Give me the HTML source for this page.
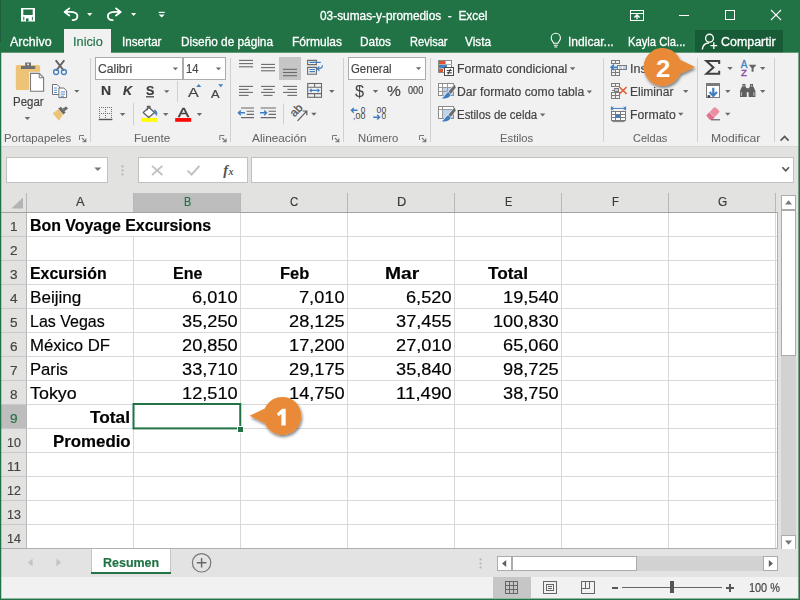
<!DOCTYPE html>
<html><head><meta charset="utf-8"><title>03-sumas-y-promedios - Excel</title>
<style>
html,body{margin:0;padding:0;background:#fff;}
body{width:800px;height:600px;overflow:hidden;font-family:"Liberation Sans",sans-serif;}
#root{position:relative;width:800px;height:600px;overflow:hidden;background:#e2e2e1;}
#root svg{position:absolute;left:0;top:0;}
.t{position:absolute;white-space:pre;transform-origin:0 0;font-family:"Liberation Sans",sans-serif;}

</style></head>
<body>
<div id="root">
<svg width="800" height="600" viewBox="0 0 800 600">
<g shape-rendering="crispEdges">
<rect x="0" y="0" width="800" height="600" fill="#e2e2e1"/>
<rect x="0" y="0" width="800" height="53" fill="#217346"/>
<rect x="64" y="29" width="47" height="24" fill="#f1f1f1"/>
<rect x="695" y="30" width="88" height="23" fill="#185c37"/>
<rect x="1" y="53" width="798" height="93" fill="#f1f1f1"/>
<rect x="1" y="146" width="798" height="1" fill="#d6d6d6"/>
<rect x="90" y="58" width="1" height="84" fill="#d0d0d0"/>
<rect x="230" y="58" width="1" height="84" fill="#d0d0d0"/>
<rect x="343" y="58" width="1" height="84" fill="#d0d0d0"/>
<rect x="430" y="58" width="1" height="84" fill="#d0d0d0"/>
<rect x="603" y="58" width="1" height="84" fill="#d0d0d0"/>
<rect x="697" y="58" width="1" height="84" fill="#d0d0d0"/>
<rect x="774" y="58" width="1" height="84" fill="#d0d0d0"/>
<rect x="6.5" y="157.5" width="101" height="25" fill="#fff" stroke="#c0c0c0"/>
<rect x="138.5" y="157.5" width="109" height="25" fill="#fff" stroke="#c0c0c0"/>
<rect x="251.5" y="157.5" width="542" height="25" fill="#fff" stroke="#c0c0c0"/>
<rect x="1" y="193" width="777" height="19" fill="#e2e2e1"/>
<rect x="133" y="193" width="108" height="19" fill="#bdbdbd"/>
<rect x="1" y="404" width="26" height="24" fill="#bdbdbd"/>
<rect x="27" y="213" width="750" height="335" fill="#fff"/>
<rect x="133" y="213" width="1" height="335" fill="#d8d8d8"/>
<rect x="133" y="193" width="1" height="19" fill="#b8b8b8"/>
<rect x="240" y="213" width="1" height="335" fill="#d8d8d8"/>
<rect x="240" y="193" width="1" height="19" fill="#b8b8b8"/>
<rect x="347" y="213" width="1" height="335" fill="#d8d8d8"/>
<rect x="347" y="193" width="1" height="19" fill="#b8b8b8"/>
<rect x="454" y="213" width="1" height="335" fill="#d8d8d8"/>
<rect x="454" y="193" width="1" height="19" fill="#b8b8b8"/>
<rect x="561" y="213" width="1" height="335" fill="#d8d8d8"/>
<rect x="561" y="193" width="1" height="19" fill="#b8b8b8"/>
<rect x="668" y="213" width="1" height="335" fill="#d8d8d8"/>
<rect x="668" y="193" width="1" height="19" fill="#b8b8b8"/>
<rect x="775" y="213" width="1" height="335" fill="#d8d8d8"/>
<rect x="775" y="193" width="1" height="19" fill="#b8b8b8"/>
<rect x="27" y="236" width="750" height="1" fill="#d8d8d8"/>
<rect x="1" y="236" width="26" height="1" fill="#c9c9c9"/>
<rect x="27" y="260" width="750" height="1" fill="#d8d8d8"/>
<rect x="1" y="260" width="26" height="1" fill="#c9c9c9"/>
<rect x="27" y="284" width="750" height="1" fill="#d8d8d8"/>
<rect x="1" y="284" width="26" height="1" fill="#c9c9c9"/>
<rect x="27" y="308" width="750" height="1" fill="#d8d8d8"/>
<rect x="1" y="308" width="26" height="1" fill="#c9c9c9"/>
<rect x="27" y="332" width="750" height="1" fill="#d8d8d8"/>
<rect x="1" y="332" width="26" height="1" fill="#c9c9c9"/>
<rect x="27" y="356" width="750" height="1" fill="#d8d8d8"/>
<rect x="1" y="356" width="26" height="1" fill="#c9c9c9"/>
<rect x="27" y="380" width="750" height="1" fill="#d8d8d8"/>
<rect x="1" y="380" width="26" height="1" fill="#c9c9c9"/>
<rect x="27" y="404" width="750" height="1" fill="#d8d8d8"/>
<rect x="1" y="404" width="26" height="1" fill="#c9c9c9"/>
<rect x="27" y="428" width="750" height="1" fill="#d8d8d8"/>
<rect x="1" y="428" width="26" height="1" fill="#c9c9c9"/>
<rect x="27" y="452" width="750" height="1" fill="#d8d8d8"/>
<rect x="1" y="452" width="26" height="1" fill="#c9c9c9"/>
<rect x="27" y="476" width="750" height="1" fill="#d8d8d8"/>
<rect x="1" y="476" width="26" height="1" fill="#c9c9c9"/>
<rect x="27" y="500" width="750" height="1" fill="#d8d8d8"/>
<rect x="1" y="500" width="26" height="1" fill="#c9c9c9"/>
<rect x="27" y="524" width="750" height="1" fill="#d8d8d8"/>
<rect x="1" y="524" width="26" height="1" fill="#c9c9c9"/>
<rect x="26" y="193" width="1" height="355" fill="#b8b8b8"/>
<rect x="1" y="212" width="777" height="1" fill="#a2a2a2"/>
<rect x="777" y="212" width="1" height="337" fill="#b0b0b0"/>
<rect x="1" y="548" width="777" height="1" fill="#b0b0b0"/>
<rect x="133" y="213" width="1" height="23" fill="#fff"/>
<rect x="778" y="193" width="21" height="356" fill="#e2e2e1"/>
<rect x="781" y="210" width="15" height="326" fill="#d2d2d2"/>
<rect x="781.5" y="195.5" width="14" height="14" fill="#fff" stroke="#ababab"/>
<rect x="781.5" y="210.5" width="14" height="145" fill="#fff" stroke="#ababab"/>
<rect x="781.5" y="535.5" width="14" height="14" fill="#fff" stroke="#ababab"/>
<rect x="1" y="549" width="798" height="28" fill="#e3e3e3"/>
<rect x="91" y="549" width="80" height="24" fill="#fff"/>
<rect x="91" y="572" width="80" height="2" fill="#217346"/>
<rect x="91" y="549" width="1" height="23" fill="#c6c6c6"/><rect x="170" y="549" width="1" height="23" fill="#c6c6c6"/>
<rect x="512" y="556" width="251" height="15" fill="#d2d2d2"/>
<rect x="497.5" y="556.5" width="14" height="14" fill="#fff" stroke="#ababab"/>
<rect x="512.5" y="556.5" width="124" height="14" fill="#fff" stroke="#ababab"/>
<rect x="763.5" y="556.5" width="14" height="14" fill="#fff" stroke="#ababab"/>
<rect x="1" y="577" width="798" height="22" fill="#f1f1f1"/>
<rect x="493" y="577" width="38" height="22" fill="#c6c6c6"/>
<rect x="0" y="53" width="1" height="547" fill="#217346"/><rect x="799" y="53" width="1" height="547" fill="#217346"/><rect x="0" y="599" width="800" height="1" fill="#217346"/>
<rect x="1" y="598" width="798" height="1" fill="#8fb8a2"/><rect x="1" y="53" width="1" height="545" fill="#217346" opacity="0.25"/><rect x="798" y="53" width="1" height="545" fill="#217346" opacity="0.6"/><rect x="0" y="0" width="1" height="42" fill="#1c5e39"/><rect x="1" y="52" width="798" height="1" fill="#f1f1f1" opacity="0.3"/>
<rect x="133.5" y="404" width="106.75" height="24.4" fill="none" stroke="#217346" stroke-width="2" shape-rendering="geometricPrecision"/>
<rect x="237" y="426" width="7" height="7" fill="#fff"/><rect x="238" y="427" width="5" height="5" fill="#217346"/>
</g>
<rect x="21" y="8" width="14" height="13.5" fill="#ffffff"/><rect x="23.3" y="9.5" width="9.4" height="5.5" fill="#217346"/><rect x="23.3" y="16.8" width="1" height="3.4" fill="#217346"/><rect x="31.9" y="16.8" width="0.9" height="3.4" fill="#217346"/><rect x="26" y="18.4" width="2.5" height="3.1" fill="#217346"/>
<g fill="none" stroke="#ffffff" stroke-width="1.8" stroke-linecap="round" stroke-linejoin="round"><path d="M69.3,8.4 L64.6,12 L69.3,15.5"/><path d="M65.4,12 C70,11.6 77.4,11.4 77.4,16 C77.4,18.6 75.4,20.2 72.6,20.2"/></g>
<polygon points="87.1,13 92.3,13 89.69999999999999,15.9" fill="#ffffff"/>
<g fill="none" stroke="#ffffff" stroke-width="1.8" stroke-linecap="round" stroke-linejoin="round"><path d="M116,8.4 L120.7,12 L116,15.5"/><path d="M119.9,12 C115.3,11.6 107.9,11.4 107.9,16 C107.9,18.6 109.9,20.2 112.7,20.2"/></g>
<polygon points="131,13 136.2,13 133.6,15.9" fill="#ffffff"/>
<line x1="158.7" y1="12.4" x2="164.7" y2="12.4" stroke="#ffffff" stroke-width="1.2"/>
<polygon points="158.7,14.6 164.7,14.6 161.7,17.6" fill="#ffffff"/>
<g fill="none" stroke="#ffffff" stroke-width="1"><rect x="630.5" y="10.5" width="13" height="10"/><path d="M630.5,13.5 H643.5"/><path d="M637,19.2 V15.2 M634.4,17.4 L637,14.8 L639.6,17.4" stroke-width="1.4"/></g>
<line x1="679" y1="15.5" x2="689" y2="15.5" stroke="#ffffff" stroke-width="1"/>
<rect x="725.5" y="10.5" width="9" height="9" fill="none" stroke="#ffffff" stroke-width="1"/>
<path d="M771,10 L781,20 M781,10 L771,20" stroke="#ffffff" stroke-width="1.1" fill="none"/>
<g fill="none" stroke="#ffffff" stroke-width="1.1"><path d="M553.6,43.2 C553.2,41.6 551.2,40.6 551.2,37.9 A4.6,4.6 0 0 1 560.4,37.9 C560.4,40.6 558.4,41.6 558,43.2 Z"/><path d="M553.8,45.2 H557.8 M554.4,47 H557.2"/></g>
<g fill="none" stroke="#ffffff" stroke-width="1.4"><circle cx="709.5" cy="38.2" r="3.9"/><path d="M702.3,49.5 C702.8,45 705.5,43 709,43"/><path d="M713.8,42.3 V49 M710.4,45.7 H717.2" stroke-width="1.3"/></g>
<rect x="15.8" y="65" width="24.3" height="25" rx="1.6" fill="#ecc377"/>
<path d="M21,66 H35.2 V68.9 H21 Z M25.2,62.4 H31 V66 H25.2 Z" fill="#707070"/><rect x="27.2" y="63.6" width="1.8" height="1.6" fill="#f1f1f1"/>
<rect x="29" y="71.9" width="16" height="20.7" fill="#f1f1f1"/>
<path d="M30.5,73.4 H39.2 L43.6,77.8 V91.2 H30.5 Z" fill="#fff" stroke="#7a7a7a" stroke-width="1.1"/><path d="M39.2,73.4 V77.8 H43.6" fill="none" stroke="#7a7a7a" stroke-width="1"/>
<polygon points="24.6,117 30.200000000000003,117 27.400000000000002,120" fill="#6a6a6a"/>
<g fill="none" stroke-linecap="round"><path d="M56.2,60.8 L63.3,70 M63.8,60.8 L56.7,70" stroke="#626262" stroke-width="1.9"/><circle cx="56.1" cy="72" r="2.5" stroke="#3f7fc1" stroke-width="1.3"/><circle cx="63.9" cy="72" r="2.5" stroke="#3f7fc1" stroke-width="1.3"/></g>
<g stroke="#707070" stroke-width="1" fill="#fff"><path d="M52.5,84.5 H57 L59.5,87 V94.5 H52.5 Z"/><path d="M58.9,88 H63.8 L66.6,90.8 V97.6 H58.9 Z"/></g>
<g stroke="#3f7fc1" stroke-width="0.9"><path d="M54,88 H57 M54,90.3 H57 M54,92.5 H57 M60.6,91.9 H65 M60.6,94.1 H65 M60.6,96.2 H64"/></g>
<polygon points="74.2,90 79.4,90 76.8,92.8" fill="#6a6a6a"/>
<path d="M52.6,113.2 L58.6,109.2 L63,114.6 L59,120.8 Z" fill="#ecc377"/>
<path d="M58.2,108.6 L61,106.8 L65.6,112.4 L63.4,114.6 Z" fill="#6a6a6a"/><path d="M62.6,108.6 L66.2,106.4 L68,108.6 L64.6,111.2 Z" fill="#6a6a6a"/>
<path d="M79.5,140 V135.5 H84" fill="none" stroke="#777" stroke-width="1"/>
<path d="M82,138 L85.6,141.6 M85.8,138.4 V141.8 H82.4" fill="none" stroke="#777" stroke-width="1.1"/>
<rect x="95.5" y="57.5" width="87" height="22" fill="#fff" stroke="#ababab" shape-rendering="crispEdges"/>
<rect x="183.5" y="57.5" width="42" height="22" fill="#fff" stroke="#ababab" shape-rendering="crispEdges"/>
<polygon points="172.7,67.4 178.1,67.4 175.39999999999998,70.30000000000001" fill="#6a6a6a"/>
<polygon points="215.8,67.4 221.20000000000002,67.4 218.5,70.30000000000001" fill="#6a6a6a"/>
<line x1="146" y1="96.8" x2="154" y2="96.8" stroke="#3b3b3b" stroke-width="1.2"/>
<polygon points="164,90.2 169.4,90.2 166.7,93.10000000000001" fill="#6a6a6a"/>
<line x1="177.5" y1="81" x2="177.5" y2="102" stroke="#d0d0d0" stroke-width="1"/>
<polygon points="196.2,87 198.7,84 201.2,87" fill="#3f7fc1"/><polygon points="218.2,84.2 223.2,84.2 220.7,87.2" fill="#3f7fc1"/>
<g fill="#6e6e6e" shape-rendering="crispEdges"><rect x="99" y="107" width="1" height="1"/><rect x="99" y="109" width="1" height="1"/><rect x="99" y="111" width="1" height="1"/><rect x="99" y="113" width="1" height="1"/><rect x="99" y="115" width="1" height="1"/><rect x="99" y="117" width="1" height="1"/><rect x="101" y="107" width="1" height="1"/><rect x="101" y="113" width="1" height="1"/><rect x="103" y="107" width="1" height="1"/><rect x="103" y="113" width="1" height="1"/><rect x="105" y="107" width="1" height="1"/><rect x="105" y="109" width="1" height="1"/><rect x="105" y="111" width="1" height="1"/><rect x="105" y="113" width="1" height="1"/><rect x="105" y="115" width="1" height="1"/><rect x="105" y="117" width="1" height="1"/><rect x="107" y="107" width="1" height="1"/><rect x="107" y="113" width="1" height="1"/><rect x="109" y="107" width="1" height="1"/><rect x="109" y="113" width="1" height="1"/><rect x="111" y="107" width="1" height="1"/><rect x="111" y="109" width="1" height="1"/><rect x="111" y="111" width="1" height="1"/><rect x="111" y="113" width="1" height="1"/><rect x="111" y="115" width="1" height="1"/><rect x="111" y="117" width="1" height="1"/></g>
<rect x="98.8" y="118.8" width="13.6" height="1.4" fill="#555"/>
<polygon points="119.9,113 125.30000000000001,113 122.60000000000001,115.9" fill="#6a6a6a"/>
<line x1="133.5" y1="103" x2="133.5" y2="125" stroke="#d0d0d0" stroke-width="1"/>
<rect x="141" y="118" width="16.2" height="3.8" fill="#ffff00"/>
<path d="M143.2,112.6 L149,107.4 L154.6,112.4 L148.7,117.5 Z" fill="#fff" stroke="#5e5e5e" stroke-width="1.3" stroke-linejoin="round"/><path d="M147.4,110.2 V106.4 H150 V108.4" fill="none" stroke="#5e5e5e" stroke-width="1.1"/><path d="M154.6,109.8 C156.6,110.6 157.6,113 156.6,115.4 C155.2,114.4 154.4,112.6 154.6,109.8 Z" fill="#3f7fc1" stroke="#3f7fc1" stroke-width="0.6"/>
<polygon points="163,113 168.4,113 165.7,115.9" fill="#6a6a6a"/>
<rect x="175.2" y="118" width="16" height="3.8" fill="#fb0a0a"/>
<polygon points="196.7,113 202.1,113 199.39999999999998,115.9" fill="#6a6a6a"/>
<path d="M219.8,140 V135.5 H224.3" fill="none" stroke="#777" stroke-width="1"/>
<path d="M222.3,138 L225.9,141.6 M226.10000000000002,138.4 V141.8 H222.70000000000002" fill="none" stroke="#777" stroke-width="1.1"/>
<line x1="239" y1="60.4" x2="253" y2="60.4" stroke="#6a6a6a" stroke-width="1.1"/>
<line x1="239" y1="63.6" x2="253" y2="63.6" stroke="#6a6a6a" stroke-width="1.1"/>
<line x1="239" y1="66.8" x2="253" y2="66.8" stroke="#6a6a6a" stroke-width="1.1"/>
<line x1="261" y1="64.4" x2="275" y2="64.4" stroke="#6a6a6a" stroke-width="1.1"/>
<line x1="261" y1="67.6" x2="275" y2="67.6" stroke="#6a6a6a" stroke-width="1.1"/>
<line x1="261" y1="70.8" x2="275" y2="70.8" stroke="#6a6a6a" stroke-width="1.1"/>
<rect x="279" y="57" width="22" height="23" fill="#c6c6c6" shape-rendering="crispEdges"/>
<line x1="283" y1="69.3" x2="297" y2="69.3" stroke="#6a6a6a" stroke-width="1.1"/>
<line x1="283" y1="72.5" x2="297" y2="72.5" stroke="#6a6a6a" stroke-width="1.1"/>
<line x1="283" y1="75.7" x2="297" y2="75.7" stroke="#6a6a6a" stroke-width="1.1"/>
<g fill="none" stroke-width="1"><path d="M307.6,60.4 H316.4 V64.6 H307.6 Z M307.6,67.4 H316.4 V74.3 H307.6 Z" stroke="#6a6a6a" stroke-width="1.1"/><path d="M309.4,62.4 H320.8 M309.4,69.5 H315 M309.4,71.6 H315" stroke="#3f7fc1" stroke-width="1.1"/><path d="M322.4,65.2 C322.6,67.8 320.6,68.9 317.2,68.8 M319.4,66.5 L317,68.8 L319.4,70.9" stroke="#3f7fc1" stroke-width="1.2"/></g>
<line x1="239" y1="86.4" x2="253" y2="86.4" stroke="#6a6a6a" stroke-width="1.1"/>
<line x1="261" y1="86.4" x2="275" y2="86.4" stroke="#6a6a6a" stroke-width="1.1"/>
<line x1="283" y1="86.4" x2="297" y2="86.4" stroke="#6a6a6a" stroke-width="1.1"/>
<line x1="239" y1="89.4" x2="248.6" y2="89.4" stroke="#6a6a6a" stroke-width="1.1"/>
<line x1="263.4" y1="89.4" x2="272.6" y2="89.4" stroke="#6a6a6a" stroke-width="1.1"/>
<line x1="287.4" y1="89.4" x2="297" y2="89.4" stroke="#6a6a6a" stroke-width="1.1"/>
<line x1="239" y1="92.4" x2="253" y2="92.4" stroke="#6a6a6a" stroke-width="1.1"/>
<line x1="261" y1="92.4" x2="275" y2="92.4" stroke="#6a6a6a" stroke-width="1.1"/>
<line x1="283" y1="92.4" x2="297" y2="92.4" stroke="#6a6a6a" stroke-width="1.1"/>
<line x1="239" y1="95.4" x2="248.6" y2="95.4" stroke="#6a6a6a" stroke-width="1.1"/>
<line x1="263.4" y1="95.4" x2="272.6" y2="95.4" stroke="#6a6a6a" stroke-width="1.1"/>
<line x1="287.4" y1="95.4" x2="297" y2="95.4" stroke="#6a6a6a" stroke-width="1.1"/>
<g fill="none" stroke="#6a6a6a" stroke-width="1.1"><rect x="307.7" y="83.5" width="13.8" height="13.8"/><path d="M307.7,87.2 H321.5 M307.7,93.6 H321.5 M314.6,83.5 V87.2 M314.6,93.6 V97.3"/></g><path d="M310,90.4 H319.2 M311.6,88.8 L310,90.4 L311.6,92 M317.6,88.8 L319.2,90.4 L317.6,92" fill="none" stroke="#3f7fc1" stroke-width="1.1"/>
<polygon points="329.1,90 334.5,90 331.8,92.9" fill="#6a6a6a"/>
<g fill="none" stroke="#6a6a6a" stroke-width="1.1"><path d="M241,108 H254 M246.6,111.2 H254 M246.6,114.4 H254 M241,117.6 H254"/><path d="M260.6,108 H276 M268.6,111.2 H276 M268.6,114.4 H276 M260.6,117.6 H276"/></g>
<g fill="none" stroke="#3f7fc1" stroke-width="1.4"><path d="M238.6,112.8 H245 M240.8,110.4 L238.4,112.8 L240.8,115.2"/><path d="M260,112.8 H266.4 M264.2,110.4 L266.6,112.8 L264.2,115.2"/></g>
<line x1="283.5" y1="103.5" x2="283.5" y2="124.5" stroke="#d0d0d0" stroke-width="1"/>
<text x="0" y="0" transform="translate(294.6,117.6) rotate(-47)" font-family="Liberation Sans, sans-serif" font-size="11.5" fill="#505050" stroke="#505050" stroke-width="0.25">ab</text>
<path d="M297.6,120.8 L306.4,111.4 M302.6,111 H306.8 V115.2" fill="none" stroke="#5a5a5a" stroke-width="1.2"/>
<polygon points="311.2,112.8 316.59999999999997,112.8 313.9,115.7" fill="#6a6a6a"/>
<path d="M332.5,140 V135.5 H337" fill="none" stroke="#777" stroke-width="1"/>
<path d="M335,138 L338.6,141.6 M338.8,138.4 V141.8 H335.4" fill="none" stroke="#777" stroke-width="1.1"/>
<rect x="348.5" y="57.5" width="77" height="22" fill="#fff" stroke="#ababab" shape-rendering="crispEdges"/>
<polygon points="415.9,67.2 421.29999999999995,67.2 418.59999999999997,70.10000000000001" fill="#6a6a6a"/>
<polygon points="372.8,90 378.2,90 375.5,92.9" fill="#6a6a6a"/>
<path d="M351.4,110.3 H357.6 M353.8,107.9 L351.4,110.3 L353.8,112.7" fill="none" stroke="#3f7fc1" stroke-width="1.4"/>
<g font-family="Liberation Sans, sans-serif" font-size="8.2" fill="#444"><text x="360.7" y="113.1">0</text><text x="353" y="119.4" textLength="12.4" lengthAdjust="spacingAndGlyphs">,00</text><text x="376.6" y="113.1" textLength="9.6" lengthAdjust="spacingAndGlyphs">00</text><text x="381.6" y="119.4">0</text></g>
<path d="M373.2,117.2 H379.6 M377.2,114.8 L379.6,117.2 L377.2,119.6" fill="none" stroke="#3f7fc1" stroke-width="1.4"/>
<path d="M419.5,140 V135.5 H424" fill="none" stroke="#777" stroke-width="1"/>
<path d="M422,138 L425.6,141.6 M425.8,138.4 V141.8 H422.4" fill="none" stroke="#777" stroke-width="1.1"/>
<g shape-rendering="crispEdges"><rect x="438.5" y="60.5" width="13" height="12" fill="#fff" stroke="#8a8a8a"/><path d="M445.5,60.5 V72 M438.5,64.5 H451.5 M438.5,68.5 H451.5" stroke="#b0b0b0" fill="none"/><rect x="439" y="61" width="6.4" height="3.4" fill="#dc5430"/><rect x="439" y="65" width="8" height="3.4" fill="#3f7fc1"/><rect x="439" y="69" width="3.6" height="3.2" fill="#dc5430"/><rect x="444.5" y="67.5" width="9.4" height="8" fill="#fff" stroke="#4a4a4a"/></g><path d="M446.8,70.4 H451.8 M446.8,72.8 H451.8 M450.6,68.8 L448,74.4" stroke="#333" stroke-width="1" fill="none"/>
<polygon points="569.9,67.3 575.3,67.3 572.6,70.2" fill="#6a6a6a"/>
<g shape-rendering="crispEdges"><rect x="438.5" y="83.5" width="15" height="12" fill="#fff" stroke="#8a8a8a"/>
<rect x="443" y="88" width="10" height="7" fill="#bdd3ec"/>
<path d="M438.5,87.5 H453.5 M438.5,91.5 H453.5 M442.5,83.5 V95.5 M447.5,83.5 V95.5" stroke="#9a9a9a" fill="none"/>
</g>
<path d="M454.6,84.6 L455.8,87.6 L450.6,94.2 L448.2,92 Z" fill="#6a6a6a" stroke="#f1f1f1" stroke-width="1.2" paint-order="stroke"/><path d="M448.1,92.1 L450.7,94.4 C450,97.6 445.8,99 441.8,98.2 C444.4,97 445.2,94.2 448.1,92.1 Z" fill="#3f7fc1" stroke="#f1f1f1" stroke-width="1.2" paint-order="stroke"/>
<polygon points="586.7,90.6 592.1,90.6 589.4000000000001,93.5" fill="#6a6a6a"/>
<g shape-rendering="crispEdges"><rect x="438.5" y="106.5" width="15" height="12" fill="#fff" stroke="#8a8a8a"/>
<rect x="443" y="110" width="10" height="8" fill="#bdd3ec"/>
<path d="M438.5,109.5 H453.5 M442.5,106.5 V118.5" stroke="#9a9a9a" fill="none"/>
</g>
<path d="M454.6,107.6 L455.8,110.6 L450.6,117.2 L448.2,115 Z" fill="#6a6a6a" stroke="#f1f1f1" stroke-width="1.2" paint-order="stroke"/><path d="M448.1,115.1 L450.7,117.4 C450,120.6 445.8,122 441.8,121.2 C444.4,120 445.2,117.2 448.1,115.1 Z" fill="#3f7fc1" stroke="#f1f1f1" stroke-width="1.2" paint-order="stroke"/>
<polygon points="539.9,113.5 545.3,113.5 542.6,116.4" fill="#6a6a6a"/>
<g shape-rendering="crispEdges" fill="none" stroke="#7a7a7a"><rect x="611.5" y="60.5" width="8" height="3"/><path d="M615.5,60.5 V63.5"/><rect x="611.5" y="69.5" width="8" height="6"/><path d="M615.5,69.5 V75.5 M611.5,72.5 H619.5"/><rect x="617.5" y="65.5" width="9" height="4" fill="#fff"/><rect x="619" y="66" width="3" height="3" fill="#b9d1ec" stroke="none"/><rect x="623" y="66" width="3" height="3" fill="#b9d1ec" stroke="none"/></g>
<path d="M611.2,67.3 H617.4 M614,64.5 L611.2,67.3 L614,70.1" fill="none" stroke="#3f7fc1" stroke-width="1.7"/>
<g shape-rendering="crispEdges" fill="none" stroke="#7a7a7a"><rect x="611.5" y="83.5" width="8" height="3"/><path d="M615.5,83.5 V86.5"/><rect x="611.5" y="92.5" width="8" height="6"/><path d="M615.5,92.5 V98.5 M611.5,95.5 H619.5"/><rect x="614.5" y="88.5" width="4" height="3" fill="#b9d1ec"/><path d="M611.5,90.5 H614.5"/></g>
<path d="M619.4,87 L626.6,93.8 M626.6,87 L619.4,93.8" stroke="#e0623c" stroke-width="1.6" fill="none"/>
<polygon points="683,90 688.4,90 685.7,92.9" fill="#6a6a6a"/>
<path d="M611.4,108.4 H625.6 M611.4,106.4 V110.4 M625.6,106.4 V110.4 M613.4,106.8 L611.6,108.4 L613.4,110 M623.6,106.8 L625.4,108.4 L623.6,110" fill="none" stroke="#3f7fc1" stroke-width="1"/>
<g shape-rendering="crispEdges"><rect x="611.5" y="111.5" width="14" height="9" fill="#fff" stroke="#7a7a7a"/><path d="M611.5,114.5 H625.5 M611.5,117.5 H625.5 M615.5,111.5 V120.5 M620.5,111.5 V120.5" stroke="#7a7a7a" fill="none"/><rect x="616" y="115" width="4" height="3" fill="#3f7fc1"/></g>
<path d="M612.4,121.6 H624.6" stroke="#7a7a7a" stroke-width="1"/>
<polygon points="678.1,112.8 683.5,112.8 680.8000000000001,115.7" fill="#6a6a6a"/>
<path d="M719.2,64 V61.1 H706.4 L713.4,67.4 L706.4,73.7 H719.2 V70.8" fill="none" stroke="#404040" stroke-width="2" stroke-linejoin="miter"/>
<polygon points="727.3,67 732.6999999999999,67 730.0,69.9" fill="#6a6a6a"/>
<g font-family="Liberation Sans, sans-serif"><text x="740.8" y="67.6" font-size="10" fill="#3f7fc1" stroke="#3f7fc1" stroke-width="0.3">A</text><text x="741" y="75.9" font-size="9.6" fill="#8747a3" stroke="#8747a3" stroke-width="0.3">Z</text></g>
<path d="M748.8,64.8 H756.4 L753.6,68.2 V71.8 H751.6 V68.2 Z" fill="#666"/>
<polygon points="760,67 765.4,67 762.7,69.9" fill="#6a6a6a"/>
<g shape-rendering="crispEdges"><rect x="706.5" y="83.5" width="13" height="14.4" fill="#fff" stroke="#7a7a7a"/><rect x="706" y="83" width="14" height="3" fill="#7a7a7a"/></g><path d="M713.3,87.8 V95.4 M709.6,92 L713.3,95.8 L717,92" fill="none" stroke="#3f7fc1" stroke-width="2.2"/><rect x="707.6" y="95.2" width="2.6" height="2.2" fill="#333"/>
<polygon points="725.1,90 730.5,90 727.8000000000001,92.9" fill="#6a6a6a"/>
<g fill="#5f5f5f"><path d="M740,97 V91 L742,86.4 H745.8 L746.8,90 V97 Z"/><path d="M748.6,97 V90 L749.6,86.4 H753.4 L755.4,91 V97 Z"/><rect x="742.4" y="84" width="3" height="2.6"/><rect x="750" y="84" width="3" height="2.6"/><rect x="746" y="88.2" width="3.4" height="4"/></g>
<path d="M741.4,92 V96 M753.9,92 V96 M743.9,85 V86 M751.5,85 V86" stroke="#c9c9c9" stroke-width="0.9" fill="none"/>
<polygon points="760,90 765.4,90 762.7,92.9" fill="#6a6a6a"/>
<path d="M706.4,115.4 L713.4,108 Q714.6,106.8 716,107.8 L719,110.4 Q720,111.6 718.8,112.8 L712.4,119.4 H709.6 Z" fill="#ea8fa1"/><path d="M706.4,115.4 L709.4,112.3 L714.6,117.1 L712.4,119.4 H709.6 Z" fill="#e2738c"/><path d="M709.4,112.3 L714.6,117.1" stroke="#f6ccd5" stroke-width="0.8"/><path d="M711,119.8 H720" stroke="#555" stroke-width="1.1"/>
<polygon points="725,112.8 730.4,112.8 727.7,115.7" fill="#6a6a6a"/>
<path d="M780.6,140.6 L784.6,136.4 L788.6,140.6" fill="none" stroke="#555" stroke-width="1.6"/>
<polygon points="94.3,167.5 101.3,167.5 97.8,171.1" fill="#777"/>
<rect x="121.6" y="165.5" width="1.8" height="1.8" fill="#b0b0b0"/>
<rect x="121.6" y="169.5" width="1.8" height="1.8" fill="#b0b0b0"/>
<rect x="121.6" y="173.5" width="1.8" height="1.8" fill="#b0b0b0"/>
<path d="M152,165.8 L162.4,175 M162.4,165.8 L152,175" stroke="#c0c0c0" stroke-width="1.7" fill="none"/>
<path d="M187.6,170.6 L191.6,174.6 L199.4,165.8" stroke="#c0c0c0" stroke-width="2" fill="none"/>
<text x="223.2" y="174.6" font-family="Liberation Serif, serif" font-style="italic" font-weight="bold" font-size="14.5" fill="#505050">f</text><text x="228.6" y="174.8" font-family="Liberation Serif, serif" font-style="italic" font-weight="bold" font-size="10" fill="#505050">x</text>
<path d="M782.4,167.2 L785.7,170.8 L789,167.2" fill="none" stroke="#555" stroke-width="1.7"/>
<polygon points="23,197.6 23,208.6 11.4,208.6" fill="#b4b4b4"/>
<polygon points="785,204.6 792,204.6 788.5,200.2" fill="#777"/><polygon points="785,540.4 792,540.4 788.5,544.8" fill="#777"/>
<polygon points="506.2,560 506.2,567 502,563.5" fill="#606060"/><polygon points="768.8,560 768.8,567 773,563.5" fill="#606060"/>
<rect x="479.6" y="558.6" width="1.8" height="1.8" fill="#b0b0b0"/>
<rect x="479.6" y="562.6" width="1.8" height="1.8" fill="#b0b0b0"/>
<rect x="479.6" y="566.6" width="1.8" height="1.8" fill="#b0b0b0"/>
<polygon points="32.6,558.4 32.6,566.6 27.8,562.5" fill="#c4c4c4"/><polygon points="56.4,558.4 56.4,566.6 61.2,562.5" fill="#c4c4c4"/>
<circle cx="201.6" cy="562.8" r="9.2" fill="none" stroke="#777" stroke-width="1.2"/><path d="M196.8,562.8 H206.4 M201.6,558 V567.6" stroke="#666" stroke-width="1.4"/>
<g shape-rendering="crispEdges" fill="none" stroke="#666"><rect x="505.5" y="581.5" width="12" height="12"/><path d="M509.5,581.5 V593.5 M513.5,581.5 V593.5 M505.5,585.5 H517.5 M505.5,589.5 H517.5"/></g>
<g shape-rendering="crispEdges" fill="none" stroke="#666"><rect x="543.5" y="581.5" width="13" height="12"/><rect x="546.5" y="584.5" width="7" height="6"/><path d="M548,586.5 H552 M548,588.5 H552"/></g>
<g shape-rendering="crispEdges" fill="none" stroke="#666"><rect x="581.5" y="581.5" width="13" height="12"/><path d="M585.5,581.5 V588.5 M589.5,581.5 V588.5 M581.5,588.5 H590"/></g>
<rect x="612" y="587" width="6" height="2" fill="#555"/>
<rect x="622" y="587" width="100" height="1" fill="#666" shape-rendering="crispEdges"/>
<rect x="670" y="581" width="4" height="12" fill="#555" shape-rendering="crispEdges"/>
<path d="M726,588 H734 M730,584 V592" stroke="#555" stroke-width="2" shape-rendering="crispEdges"/>
</svg>
<span class="t" style="left:320.20px;top:10.14px;font-size:12px;line-height:12px;color:#fff;transform:scaleX(0.9882);-webkit-text-stroke:0.3px #fff;white-space:pre;">03-sumas-y-promedios  -  Excel</span>
<span class="t" style="left:9.97px;top:35.72px;font-size:12.5px;line-height:12.5px;color:#fff;transform:scaleX(0.9991);-webkit-text-stroke:0.3px #fff;">Archivo</span>
<span class="t" style="left:121.62px;top:35.72px;font-size:12.5px;line-height:12.5px;color:#fff;transform:scaleX(0.9318);-webkit-text-stroke:0.3px #fff;">Insertar</span>
<span class="t" style="left:180.62px;top:35.72px;font-size:12.5px;line-height:12.5px;color:#fff;transform:scaleX(0.9456);-webkit-text-stroke:0.3px #fff;">Diseño de página</span>
<span class="t" style="left:291.88px;top:35.72px;font-size:12.5px;line-height:12.5px;color:#fff;transform:scaleX(0.9598);-webkit-text-stroke:0.3px #fff;">Fórmulas</span>
<span class="t" style="left:360.38px;top:35.72px;font-size:12.5px;line-height:12.5px;color:#fff;transform:scaleX(0.9493);-webkit-text-stroke:0.3px #fff;">Datos</span>
<span class="t" style="left:409.88px;top:35.72px;font-size:12.5px;line-height:12.5px;color:#fff;transform:scaleX(0.8850);-webkit-text-stroke:0.3px #fff;">Revisar</span>
<span class="t" style="left:465.38px;top:35.72px;font-size:12.5px;line-height:12.5px;color:#fff;transform:scaleX(0.9428);-webkit-text-stroke:0.3px #fff;">Vista</span>
<span class="t" style="left:567.98px;top:35.72px;font-size:12.5px;line-height:12.5px;color:#fff;transform:scaleX(0.9661);-webkit-text-stroke:0.3px #fff;">Indicar...</span>
<span class="t" style="left:627.77px;top:35.72px;font-size:12.5px;line-height:12.5px;color:#fff;transform:scaleX(0.8988);-webkit-text-stroke:0.3px #fff;">Kayla Cla...</span>
<span class="t" style="left:720.67px;top:35.72px;font-size:12.5px;line-height:12.5px;color:#fff;transform:scaleX(0.9941);-webkit-text-stroke:0.3px #fff;">Compartir</span>
<span class="t" style="left:72.62px;top:35.72px;font-size:12.5px;line-height:12.5px;color:#217346;transform:scaleX(1.0193);-webkit-text-stroke:0.18px #217346;">Inicio</span>
<span class="t" style="left:12.80px;top:96.34px;font-size:12px;line-height:12px;color:#444444;transform:scaleX(0.9553);-webkit-text-stroke:0.18px #444444;">Pegar</span>
<span class="t" style="left:4.04px;top:132.92px;font-size:11.2px;line-height:11.2px;color:#666666;transform:scaleX(1.0179);-webkit-text-stroke:0.05px #666666;">Portapapeles</span>
<span class="t" style="left:133.94px;top:132.92px;font-size:11.2px;line-height:11.2px;color:#666666;transform:scaleX(1.0395);-webkit-text-stroke:0.05px #666666;">Fuente</span>
<span class="t" style="left:251.64px;top:132.92px;font-size:11.2px;line-height:11.2px;color:#666666;transform:scaleX(1.0561);-webkit-text-stroke:0.05px #666666;">Alineación</span>
<span class="t" style="left:358.24px;top:132.92px;font-size:11.2px;line-height:11.2px;color:#666666;transform:scaleX(1.0131);-webkit-text-stroke:0.05px #666666;">Número</span>
<span class="t" style="left:499.94px;top:132.92px;font-size:11.2px;line-height:11.2px;color:#666666;transform:scaleX(1.0081);-webkit-text-stroke:0.05px #666666;">Estilos</span>
<span class="t" style="left:632.94px;top:132.92px;font-size:11.2px;line-height:11.2px;color:#666666;transform:scaleX(0.9854);-webkit-text-stroke:0.05px #666666;">Celdas</span>
<span class="t" style="left:711.14px;top:132.92px;font-size:11.2px;line-height:11.2px;color:#666666;transform:scaleX(1.0888);-webkit-text-stroke:0.05px #666666;">Modificar</span>
<span class="t" style="left:98.30px;top:62.64px;font-size:12px;line-height:12px;color:#444444;transform:scaleX(1.0084);-webkit-text-stroke:0.18px #444444;">Calibri</span>
<span class="t" style="left:186.40px;top:62.64px;font-size:12px;line-height:12px;color:#444444;transform:scaleX(0.9319);-webkit-text-stroke:0.18px #444444;">14</span>
<span class="t" style="left:101.08px;top:84.97px;font-size:12.5px;line-height:12.5px;color:#3b3b3b;transform:scaleX(1.1128);font-weight:bold;-webkit-text-stroke:0.18px #3b3b3b;">N</span>
<span class="t" style="left:122.97px;top:84.97px;font-size:12.5px;line-height:12.5px;color:#3b3b3b;transform:scaleX(1.0131);font-weight:bold;font-style:italic;-webkit-text-stroke:0.18px #3b3b3b;">K</span>
<span class="t" style="left:145.88px;top:84.97px;font-size:12.5px;line-height:12.5px;color:#3b3b3b;transform:scaleX(1.0007);font-weight:bold;-webkit-text-stroke:0.18px #3b3b3b;">S</span>
<span class="t" style="left:187.62px;top:85.97px;font-size:13.5px;line-height:13.5px;color:#444444;transform:scaleX(1.1924);-webkit-text-stroke:0.18px #444444;">A</span>
<span class="t" style="left:210.67px;top:88.51px;font-size:10.5px;line-height:10.5px;color:#444444;transform:scaleX(1.2187);-webkit-text-stroke:0.18px #444444;">A</span>
<span class="t" style="left:177.76px;top:107.21px;font-size:12.8px;line-height:12.8px;color:#444444;transform:scaleX(1.2964);-webkit-text-stroke:0.18px #444444;-webkit-text-stroke:0.5px #444;">A</span>
<span class="t" style="left:350.80px;top:62.74px;font-size:12px;line-height:12px;color:#444444;transform:scaleX(0.9484);-webkit-text-stroke:0.18px #444444;">General</span>
<span class="t" style="left:355.18px;top:82.83px;font-size:16.5px;line-height:16.5px;color:#444444;transform:scaleX(0.9850);-webkit-text-stroke:0.18px #444444;-webkit-text-stroke:0;">$</span>
<span class="t" style="left:386.87px;top:83.94px;font-size:14.6px;line-height:14.6px;color:#444444;transform:scaleX(1.0674);-webkit-text-stroke:0.18px #444444;">%</span>
<span class="t" style="left:407.50px;top:85.93px;font-size:10px;line-height:10px;color:#444444;transform:scaleX(0.9109);-webkit-text-stroke:0.18px #444444;">000</span>
<span class="t" style="left:457.10px;top:62.74px;font-size:12px;line-height:12px;color:#444444;transform:scaleX(1.0207);-webkit-text-stroke:0.18px #444444;">Formato condicional</span>
<span class="t" style="left:457.10px;top:85.74px;font-size:12px;line-height:12px;color:#444444;transform:scaleX(1.0144);-webkit-text-stroke:0.18px #444444;">Dar formato como tabla</span>
<span class="t" style="left:457.10px;top:108.84px;font-size:12px;line-height:12px;color:#444444;transform:scaleX(0.9542);-webkit-text-stroke:0.18px #444444;">Estilos de celda</span>
<span class="t" style="left:629.60px;top:62.64px;font-size:12px;line-height:12px;color:#444444;transform:scaleX(1.0445);-webkit-text-stroke:0.18px #444444;">Insertar</span>
<span class="t" style="left:629.60px;top:85.74px;font-size:12px;line-height:12px;color:#444444;transform:scaleX(1.0013);-webkit-text-stroke:0.18px #444444;">Eliminar</span>
<span class="t" style="left:629.60px;top:108.84px;font-size:12px;line-height:12px;color:#444444;transform:scaleX(1.0249);-webkit-text-stroke:0.18px #444444;">Formato</span>
<span class="t" style="left:749.10px;top:582.24px;font-size:12px;line-height:12px;color:#444444;transform:scaleX(0.9080);-webkit-text-stroke:0.18px #444444;">100 %</span>
<span class="t" style="left:102.88px;top:556.72px;font-size:12.5px;line-height:12.5px;color:#217346;transform:scaleX(0.9977);font-weight:bold;-webkit-text-stroke:0.18px #217346;">Resumen</span>
<span class="t" style="left:75.86px;top:196.26px;font-size:12.8px;line-height:12.8px;color:#3a3a3a;transform:scaleX(1.0039);-webkit-text-stroke:0.18px #3a3a3a;">A</span>
<span class="t" style="left:184.36px;top:196.26px;font-size:12.8px;line-height:12.8px;color:#217346;transform:scaleX(0.8518);-webkit-text-stroke:0.18px #217346;">B</span>
<span class="t" style="left:289.96px;top:196.26px;font-size:12.8px;line-height:12.8px;color:#3a3a3a;transform:scaleX(0.8951);-webkit-text-stroke:0.18px #3a3a3a;">C</span>
<span class="t" style="left:396.96px;top:196.26px;font-size:12.8px;line-height:12.8px;color:#3a3a3a;transform:scaleX(1.0032);-webkit-text-stroke:0.18px #3a3a3a;">D</span>
<span class="t" style="left:505.26px;top:196.26px;font-size:12.8px;line-height:12.8px;color:#3a3a3a;transform:scaleX(0.8518);-webkit-text-stroke:0.18px #3a3a3a;">E</span>
<span class="t" style="left:612.16px;top:196.26px;font-size:12.8px;line-height:12.8px;color:#3a3a3a;transform:scaleX(0.8789);-webkit-text-stroke:0.18px #3a3a3a;">F</span>
<span class="t" style="left:718.06px;top:196.26px;font-size:12.8px;line-height:12.8px;color:#3a3a3a;transform:scaleX(0.9309);-webkit-text-stroke:0.18px #3a3a3a;">G</span>
<span class="t" style="left:10.03px;top:220.62px;font-size:12.5px;line-height:12.5px;color:#444444;transform:scaleX(1.0858);-webkit-text-stroke:0.18px #444444;">1</span>
<span class="t" style="left:10.03px;top:244.62px;font-size:12.5px;line-height:12.5px;color:#444444;transform:scaleX(1.0858);-webkit-text-stroke:0.18px #444444;">2</span>
<span class="t" style="left:10.03px;top:268.62px;font-size:12.5px;line-height:12.5px;color:#444444;transform:scaleX(1.0858);-webkit-text-stroke:0.18px #444444;">3</span>
<span class="t" style="left:10.03px;top:292.62px;font-size:12.5px;line-height:12.5px;color:#444444;transform:scaleX(1.0858);-webkit-text-stroke:0.18px #444444;">4</span>
<span class="t" style="left:10.03px;top:316.62px;font-size:12.5px;line-height:12.5px;color:#444444;transform:scaleX(1.0858);-webkit-text-stroke:0.18px #444444;">5</span>
<span class="t" style="left:10.03px;top:340.62px;font-size:12.5px;line-height:12.5px;color:#444444;transform:scaleX(1.0858);-webkit-text-stroke:0.18px #444444;">6</span>
<span class="t" style="left:10.03px;top:364.62px;font-size:12.5px;line-height:12.5px;color:#444444;transform:scaleX(1.0858);-webkit-text-stroke:0.18px #444444;">7</span>
<span class="t" style="left:10.03px;top:388.62px;font-size:12.5px;line-height:12.5px;color:#444444;transform:scaleX(1.0858);-webkit-text-stroke:0.18px #444444;">8</span>
<span class="t" style="left:10.03px;top:412.62px;font-size:12.5px;line-height:12.5px;color:#217346;transform:scaleX(1.0858);-webkit-text-stroke:0.18px #217346;">9</span>
<span class="t" style="left:6.88px;top:436.62px;font-size:12.5px;line-height:12.5px;color:#444444;transform:scaleX(0.9960);-webkit-text-stroke:0.18px #444444;">10</span>
<span class="t" style="left:6.88px;top:460.62px;font-size:12.5px;line-height:12.5px;color:#444444;transform:scaleX(1.0667);-webkit-text-stroke:0.18px #444444;">11</span>
<span class="t" style="left:6.88px;top:484.62px;font-size:12.5px;line-height:12.5px;color:#444444;transform:scaleX(0.9960);-webkit-text-stroke:0.18px #444444;">12</span>
<span class="t" style="left:6.88px;top:508.62px;font-size:12.5px;line-height:12.5px;color:#444444;transform:scaleX(0.9960);-webkit-text-stroke:0.18px #444444;">13</span>
<span class="t" style="left:6.88px;top:532.62px;font-size:12.5px;line-height:12.5px;color:#444444;transform:scaleX(0.9960);-webkit-text-stroke:0.18px #444444;">14</span>
<span class="t" style="left:29.79px;top:217.40px;font-size:16.3px;line-height:16.3px;color:#000;transform:scaleX(0.9775);font-weight:bold;-webkit-text-stroke:0.18px #000;">Bon Voyage Excursions</span>
<span class="t" style="left:29.79px;top:265.40px;font-size:16.3px;line-height:16.3px;color:#000;transform:scaleX(0.9733);font-weight:bold;-webkit-text-stroke:0.18px #000;">Excursión</span>
<span class="t" style="left:172.94px;top:265.40px;font-size:16.3px;line-height:16.3px;color:#000;transform:scaleX(0.9834);font-weight:bold;-webkit-text-stroke:0.18px #000;">Ene</span>
<span class="t" style="left:279.58px;top:265.40px;font-size:16.3px;line-height:16.3px;color:#000;transform:scaleX(1.0096);font-weight:bold;-webkit-text-stroke:0.18px #000;">Feb</span>
<span class="t" style="left:384.79px;top:265.40px;font-size:16.3px;line-height:16.3px;color:#000;transform:scaleX(1.1816);font-weight:bold;-webkit-text-stroke:0.18px #000;">Mar</span>
<span class="t" style="left:487.58px;top:265.40px;font-size:16.3px;line-height:16.3px;color:#000;transform:scaleX(1.0595);font-weight:bold;-webkit-text-stroke:0.18px #000;">Total</span>
<span class="t" style="left:30.15px;top:288.81px;font-size:17px;line-height:17px;color:#000;transform:scaleX(1.0050);-webkit-text-stroke:0.18px #000;">Beijing</span>
<span class="t" style="left:30.15px;top:312.81px;font-size:17px;line-height:17px;color:#000;transform:scaleX(0.9407);-webkit-text-stroke:0.18px #000;">Las Vegas</span>
<span class="t" style="left:30.15px;top:336.81px;font-size:17px;line-height:17px;color:#000;transform:scaleX(0.9860);-webkit-text-stroke:0.18px #000;">México DF</span>
<span class="t" style="left:30.15px;top:360.81px;font-size:17px;line-height:17px;color:#000;transform:scaleX(0.9785);-webkit-text-stroke:0.18px #000;">Paris</span>
<span class="t" style="left:30.15px;top:384.81px;font-size:17px;line-height:17px;color:#000;transform:scaleX(1.0513);-webkit-text-stroke:0.18px #000;">Tokyo</span>
<span class="t" style="left:191.95px;top:288.81px;font-size:17px;line-height:17px;color:#000;transform:scaleX(1.0694);-webkit-text-stroke:0.18px #000;">6,010</span>
<span class="t" style="left:298.95px;top:288.81px;font-size:17px;line-height:17px;color:#000;transform:scaleX(1.0694);-webkit-text-stroke:0.18px #000;">7,010</span>
<span class="t" style="left:405.95px;top:288.81px;font-size:17px;line-height:17px;color:#000;transform:scaleX(1.0694);-webkit-text-stroke:0.18px #000;">6,520</span>
<span class="t" style="left:502.75px;top:288.81px;font-size:17px;line-height:17px;color:#000;transform:scaleX(1.0712);-webkit-text-stroke:0.18px #000;">19,540</span>
<span class="t" style="left:181.75px;top:312.81px;font-size:17px;line-height:17px;color:#000;transform:scaleX(1.0712);-webkit-text-stroke:0.18px #000;">35,250</span>
<span class="t" style="left:288.75px;top:312.81px;font-size:17px;line-height:17px;color:#000;transform:scaleX(1.0712);-webkit-text-stroke:0.18px #000;">28,125</span>
<span class="t" style="left:395.75px;top:312.81px;font-size:17px;line-height:17px;color:#000;transform:scaleX(1.0712);-webkit-text-stroke:0.18px #000;">37,455</span>
<span class="t" style="left:492.75px;top:312.81px;font-size:17px;line-height:17px;color:#000;transform:scaleX(1.0691);-webkit-text-stroke:0.18px #000;">100,830</span>
<span class="t" style="left:181.75px;top:336.81px;font-size:17px;line-height:17px;color:#000;transform:scaleX(1.0712);-webkit-text-stroke:0.18px #000;">20,850</span>
<span class="t" style="left:288.75px;top:336.81px;font-size:17px;line-height:17px;color:#000;transform:scaleX(1.0712);-webkit-text-stroke:0.18px #000;">17,200</span>
<span class="t" style="left:395.75px;top:336.81px;font-size:17px;line-height:17px;color:#000;transform:scaleX(1.0712);-webkit-text-stroke:0.18px #000;">27,010</span>
<span class="t" style="left:502.75px;top:336.81px;font-size:17px;line-height:17px;color:#000;transform:scaleX(1.0712);-webkit-text-stroke:0.18px #000;">65,060</span>
<span class="t" style="left:181.75px;top:360.81px;font-size:17px;line-height:17px;color:#000;transform:scaleX(1.0712);-webkit-text-stroke:0.18px #000;">33,710</span>
<span class="t" style="left:288.75px;top:360.81px;font-size:17px;line-height:17px;color:#000;transform:scaleX(1.0712);-webkit-text-stroke:0.18px #000;">29,175</span>
<span class="t" style="left:395.75px;top:360.81px;font-size:17px;line-height:17px;color:#000;transform:scaleX(1.0712);-webkit-text-stroke:0.18px #000;">35,840</span>
<span class="t" style="left:502.75px;top:360.81px;font-size:17px;line-height:17px;color:#000;transform:scaleX(1.0712);-webkit-text-stroke:0.18px #000;">98,725</span>
<span class="t" style="left:181.75px;top:384.81px;font-size:17px;line-height:17px;color:#000;transform:scaleX(1.0712);-webkit-text-stroke:0.18px #000;">12,510</span>
<span class="t" style="left:288.75px;top:384.81px;font-size:17px;line-height:17px;color:#000;transform:scaleX(1.0712);-webkit-text-stroke:0.18px #000;">14,750</span>
<span class="t" style="left:395.75px;top:384.81px;font-size:17px;line-height:17px;color:#000;transform:scaleX(1.0979);-webkit-text-stroke:0.18px #000;">11,490</span>
<span class="t" style="left:502.75px;top:384.81px;font-size:17px;line-height:17px;color:#000;transform:scaleX(1.0712);-webkit-text-stroke:0.18px #000;">38,750</span>
<span class="t" style="left:89.78px;top:409.40px;font-size:16.3px;line-height:16.3px;color:#000;transform:scaleX(1.0622);font-weight:bold;-webkit-text-stroke:0.18px #000;">Total</span>
<span class="t" style="left:52.79px;top:433.40px;font-size:16.3px;line-height:16.3px;color:#000;transform:scaleX(1.0338);font-weight:bold;-webkit-text-stroke:0.18px #000;">Promedio</span>
<svg width="800" height="600" viewBox="0 0 800 600">
<defs><filter id="sh" x="-30%" y="-30%" width="170%" height="170%"><feGaussianBlur in="SourceAlpha" stdDeviation="1.5"/><feOffset dx="0.8" dy="2"/><feComponentTransfer><feFuncA type="linear" slope="0.5"/></feComponentTransfer><feMerge><feMergeNode/><feMergeNode in="SourceGraphic"/></feMerge></filter></defs>
<g filter="url(#sh)"><path d="M249.7,415.7 L264.8,408.50 A19,19 0 1 1 264.8,423.30 Z" fill="#e98a38"/></g>
<g filter="url(#sh)"><path d="M695,66.9 L680,59.76 A18.9,18.9 0 1 0 680,74.04 Z" fill="#e98a38"/></g>
<path d="M285.7,425.6 H281.4 V414 L278.5,416.2 L276.9,413.6 L282.3,408.8 H285.7 Z" fill="#fff"/>
<g font-family="Liberation Sans, sans-serif" font-weight="bold" font-size="23.2" fill="#fff"><text x="655.9" y="77" textLength="14.4" lengthAdjust="spacingAndGlyphs">2</text></g>
</svg>
</div>
</body></html>
